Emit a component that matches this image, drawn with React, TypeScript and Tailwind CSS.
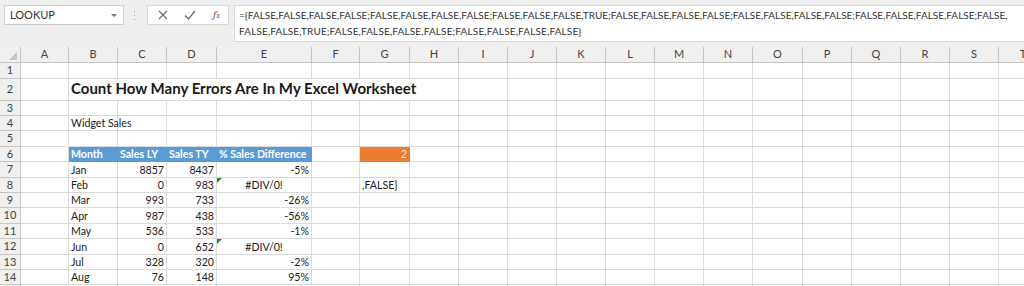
import React from "react";

const font = { fontFamily: "Lato, 'Noto Sans', sans-serif" };

// column widths incl. 1px right gridline
const cols = [
  { id: "A", w: 48 },
  { id: "B", w: 49 },
  { id: "C", w: 49 },
  { id: "D", w: 50 },
  { id: "E", w: 95 },
  { id: "F", w: 48 },
  { id: "G", w: 50 },
  { id: "H", w: 49 },
  { id: "I", w: 49 },
  { id: "J", w: 49 },
  { id: "K", w: 49 },
  { id: "L", w: 49 },
  { id: "M", w: 49 },
  { id: "N", w: 49 },
  { id: "O", w: 50 },
  { id: "P", w: 49 },
  { id: "Q", w: 49 },
  { id: "R", w: 49 },
  { id: "S", w: 49 },
  { id: "T", w: 49 },
];

const rowHeights = [16, 22, 15, 15, 16, 15, 16, 15, 15, 16, 15, 16, 15, 15, 16];

type Cell = {
  text?: string;
  align?: "left" | "right" | "center";
  span?: number;
  fill?: string;
  color?: string;
  bold?: boolean;
  big?: boolean;
  flag?: boolean;
};

const sales: [string, number, number, string][] = [
  ["Jan", 8857, 8437, "-5%"],
  ["Feb", 0, 983, "#DIV/0!"],
  ["Mar", 993, 733, "-26%"],
  ["Apr", 987, 438, "-56%"],
  ["May", 536, 533, "-1%"],
  ["Jun", 0, 652, "#DIV/0!"],
  ["Jul", 328, 320, "-2%"],
  ["Aug", 76, 148, "95%"],
];

function buildRow(r: number): Record<number, Cell> {
  const blue = "#5b9bd5";
  if (r === 2) return { 1: { text: "Count How Many Errors Are In My Excel Worksheet", span: 7, bold: true, big: true } };
  if (r === 4) return { 1: { text: "Widget Sales" } };
  if (r === 6)
    return {
      1: { text: "Month", fill: blue, color: "#fff", bold: true },
      2: { text: "Sales LY", fill: blue, color: "#fff", bold: true },
      3: { text: "Sales TY", fill: blue, color: "#fff", bold: true },
      4: { text: "% Sales Difference", fill: blue, color: "#fff", bold: true },
      6: { text: "2", fill: "#ed7d31", color: "#fbe5d6", align: "right" },
    };
  if (r >= 7 && r <= 14) {
    const [m, ly, ty, diff] = sales[r - 7];
    const err = diff.startsWith("#");
    const row: Record<number, Cell> = {
      1: { text: m },
      2: { text: String(ly), align: "right" },
      3: { text: String(ty), align: "right" },
      4: { text: diff, align: err ? "center" : "right", flag: err },
    };
    if (r === 8) row[6] = { text: ",FALSE}" };
    return row;
  }
  return {};
}

function SheetRow({ r, h }: { r: number; h: number }) {
  const cells = buildRow(r);
  const out: React.ReactNode[] = [];
  let i = 0;
  while (i < cols.length) {
    const c = cells[i] || {};
    const span = c.span || 1;
    const w = cols.slice(i, i + span).reduce((s, x) => s + x.w, 0);
    const justify =
      c.align === "right" ? "justify-end" : c.align === "center" ? "justify-center" : "justify-start";
    out.push(
      <div
        key={i}
        className={`relative flex shrink-0 items-end overflow-visible whitespace-nowrap border-r border-b px-[2px] ${justify} ${
          c.big ? "text-[15px] pb-[1px]" : "text-[10.6px] leading-[14px]"
        } ${c.bold ? "font-bold" : ""}`}
        style={{
          width: w,
          height: h,
          background: c.fill,
          borderColor: c.fill ? c.fill : "#dadada",
          color: c.color || "#1a1a1a",
        }}
      >
        {c.flag && (
          <span className="absolute left-0 top-0 h-0 w-0 border-t-[5px] border-r-[5px] border-t-[#1e8c3a] border-r-transparent" />
        )}
        {c.text}
      </div>
    );
    i += span;
  }
  return (
    <div className="flex">
      <div
        className="flex w-[21px] shrink-0 items-center justify-center border-r border-b border-[#c6c6c6] bg-[#f0f0f0] text-[11px] text-[#444]"
        style={{ height: h }}
      >
        {r < 15 ? r : ""}
      </div>
      {out}
    </div>
  );
}

function FormulaBar() {
  return (
    <div className="flex h-[47px] bg-[#efefef] pt-[5px]">
      {/* name box */}
      <div className="ml-[4px] flex h-[20px] w-[120px] shrink-0 items-center justify-between border border-[#cfcfcf] bg-white pl-[5px] pr-[6px] text-[11px] text-[#333]">
        <span>LOOKUP</span>
        <span className="mt-[1px] h-0 w-0 border-x-[3px] border-t-[3px] border-x-transparent border-t-[#777]" />
      </div>
      <div className="ml-[10px] mt-[6px] flex h-[9px] shrink-0 flex-col justify-between">
        <span className="h-[1px] w-[1px] bg-[#9a9a9a]" />
        <span className="h-[1px] w-[1px] bg-[#9a9a9a]" />
        <span className="h-[1px] w-[1px] bg-[#9a9a9a]" />
      </div>
      {/* buttons */}
      <div className="ml-[12px] flex h-[20px] w-[82px] shrink-0 items-center border border-[#d9d9d9] bg-white text-[#6a6a6a]">
        <svg width="10" height="10" viewBox="0 0 10 10" className="ml-[10px]">
          <path d="M1 1 L9 9 M9 1 L1 9" stroke="#6a6a6a" strokeWidth="1.1" fill="none" />
        </svg>
        <svg width="12" height="10" viewBox="0 0 12 10" className="ml-[16px]">
          <path d="M1 5.5 L4.5 9 L11 1" stroke="#6a6a6a" strokeWidth="1.3" fill="none" />
        </svg>
        <span className="ml-[17px] font-serif text-[11px] italic text-[#6a6a6a]">
          f<span className="text-[8px]">x</span>
        </span>
      </div>
      {/* formula */}
      <div className="ml-[5px] h-[37px] min-w-0 flex-1 overflow-hidden border border-r-0 border-[#d9d9d9] bg-white pl-[4px] pt-[1px] text-[10px] leading-[16px] text-[#333]">
        <div className="whitespace-nowrap">
          ={"{"}FALSE,FALSE,FALSE,FALSE;FALSE,FALSE,FALSE,FALSE;FALSE,FALSE,FALSE,TRUE;FALSE,FALSE,FALSE,FALSE;FALSE,FALSE,FALSE,FALSE;FALSE,FALSE,FALSE,FALSE;FALSE,
        </div>
        <div className="whitespace-nowrap tracking-[0.15px]">
          FALSE,FALSE,TRUE;FALSE,FALSE,FALSE,FALSE;FALSE,FALSE,FALSE,FALSE{"}"}
        </div>
      </div>
    </div>
  );
}

export default function App() {
  return (
    <div className="h-[286px] w-[1024px] overflow-hidden bg-white" style={font}>
      <FormulaBar />
      {/* column headers */}
      <div className="flex h-[16px] bg-[#f0f0f0]">
        <div className="relative w-[21px] shrink-0 border-r border-b border-[#c6c6c6]">
          <span className="absolute bottom-[2px] right-[3px] h-0 w-0 border-b-[8px] border-l-[8px] border-b-[#c4c4c4] border-l-transparent" />
        </div>
        {cols.map((c) => (
          <div
            key={c.id}
            className="flex shrink-0 items-center justify-center border-r border-b border-[#c6c6c6] text-[11px] text-[#444]"
            style={{ width: c.w }}
          >
            {c.id}
          </div>
        ))}
      </div>
      {rowHeights.map((h, i) => (
        <SheetRow key={i} r={i + 1} h={h} />
      ))}
    </div>
  );
}
